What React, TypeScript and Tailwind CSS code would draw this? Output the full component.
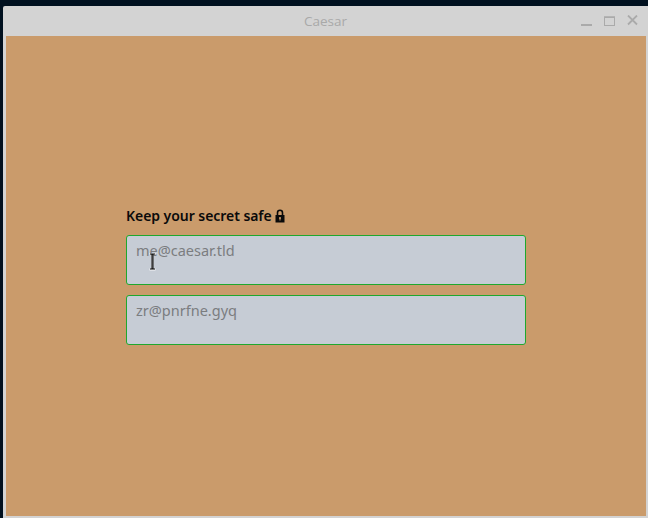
export default function App() {
  return (
    <div className="w-[648px] h-[518px] bg-[#00101f] pl-[3px] pt-[6px] overflow-hidden">
      <div className="w-[645px] h-[512px] bg-[#d3d3d3] rounded-tl-[2px] flex flex-col pl-[3px] pr-[2px] pb-[2px] font-['Noto_Sans',sans-serif]">
        <div className="h-[30px] flex items-center relative shrink-0">
          <div className="flex-1 text-center text-[13.500px] pt-[1px] pr-[1px] text-[#a9a9a9] font-['Open_Sans',sans-serif]">Caesar</div>
          <div className="absolute right-[8px] top-[10px] flex items-start gap-[12px]">
            <svg width="11" height="10" viewBox="0 0 11 10"><rect x="0" y="8" width="11" height="2" fill="#aaaaaa" /></svg>
            <svg width="11" height="10" viewBox="0 0 11 10" fill="none"><rect x="0.5" y="1" width="10" height="8.500" stroke="#aaaaaa" /><rect x="0" y="0.500" width="11" height="1.500" fill="#aaaaaa" /></svg>
            <svg width="11" height="11" viewBox="0 0 11 11" fill="none" className="-mt-[1px]"><path d="M1 0.500 10 9.500M10 0.500 1 9.500" stroke="#aaaaaa" strokeWidth="1.800" /></svg>
          </div>
        </div>
        <div className="flex-1 bg-[#ca9b6b] flex flex-col items-center pt-[171px] relative">
          <div className="w-[400px] flex flex-col">
            <div className="h-[18px] flex items-center gap-[3px] text-[14px] tracking-[-0.05px] leading-[18px] font-semibold text-[#0a0a0a]">
              <span>Keep your secret safe</span>
              <svg width="10" height="14" viewBox="0 0 10 14" className="mb-[1px]">
                <path d="M2.500 7V3.800a2.500 2.500 0 0 1 5 0V7" fill="none" stroke="#0a0a0a" strokeWidth="1.600" />
                <path d="M0.500 6h9v7.500h-9zM5 8a1 1 0 0 0-.5 1.900v1.600h1V9.900A1 1 0 0 0 5 8z" fill="#0a0a0a" fillRule="evenodd" />
              </svg>
            </div>
            <div className="mt-[10px] h-[50px] bg-[#c6ccd5] border border-[#1fa82e] rounded-[3px] px-[9px] pt-[4px] text-[14.500px] leading-[21px] text-[#7b7d80]">me@caesar.tld</div>
            <div className="mt-[10px] h-[50px] bg-[#c6ccd5] border border-[#1fa82e] rounded-[3px] px-[9px] pt-[4px] text-[14.500px] leading-[21px] text-[#7b7d80]">zr@pnrfne.gyq</div>
          </div>
          <svg width="7" height="18" viewBox="0 0 7 18" className="absolute left-[143px] top-[217px]">
            <path d="M0.500 0.500h6M0.500 16.500h6M3.500 0.500v16" fill="none" stroke="#ffffff" strokeWidth="2" opacity="0.8" />
            <path d="M1 1h5M1 16h5M3 1v15M4 1v15" fill="none" stroke="#000000" strokeWidth="1" />
          </svg>
        </div>
      </div>
    </div>
  );
}
